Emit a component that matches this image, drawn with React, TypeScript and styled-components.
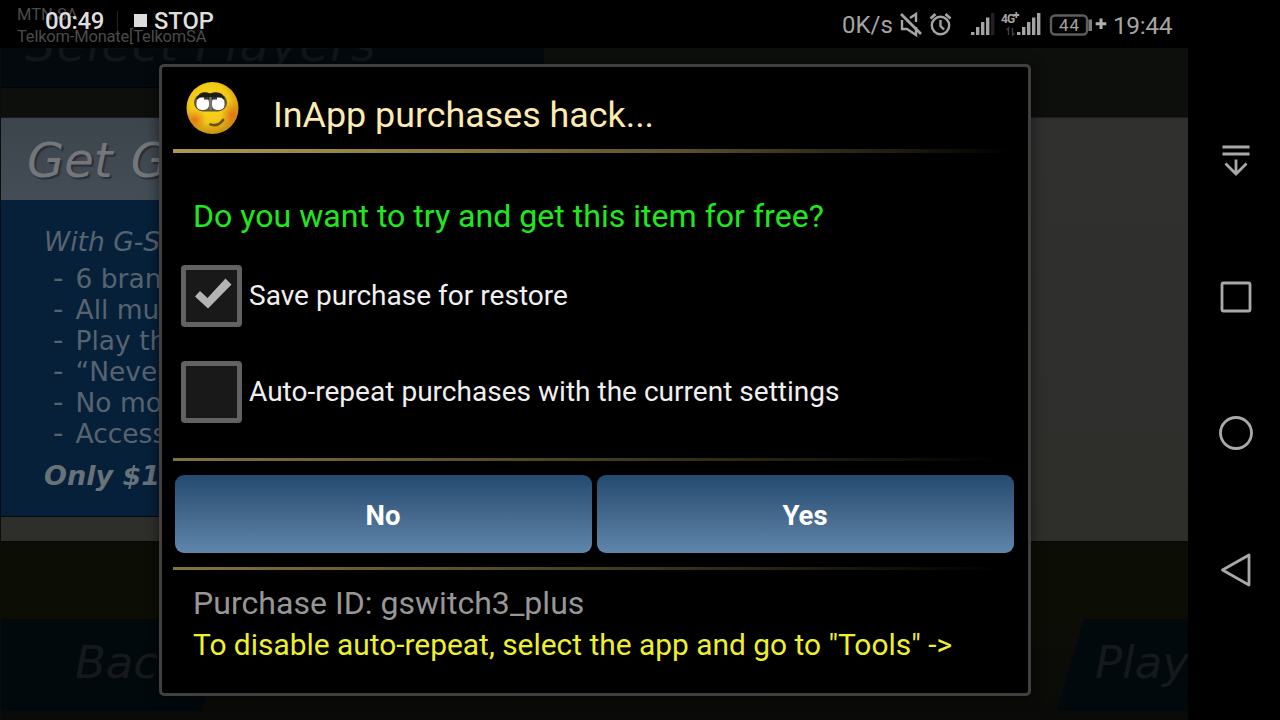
import React from "react";
import styled, { createGlobalStyle } from "styled-components";

const GlobalStyle = createGlobalStyle`
  html, body { margin: 0; padding: 0; background: #000; }
  body { width: 1280px; height: 720px; overflow: hidden; }
  * { box-sizing: border-box; }
`;

const Device = styled.div`
  display: grid;
  grid-template-columns: 1188px 92px;
  width: 1280px;
  height: 720px;
  background: #000;
  overflow: hidden;
  font-family: Roboto, "Liberation Sans", sans-serif;
`;

const Main = styled.main`
  position: relative;
  display: flex;
  flex-direction: column;
  height: 720px;
  overflow: hidden;
`;

/* ---------- status bar ---------- */

const StatusBar = styled.header`
  position: relative;
  display: flex;
  justify-content: space-between;
  height: 48px;
  flex: none;
  background: #000;
`;

const Carriers = styled.div`
  padding: 4px 0 0 17px;
  color: #4b4b4b;
  font-size: 16.5px;
  line-height: 22px;
  white-space: nowrap;
`;

const CarrierName = styled.div<{ $spacing?: number }>`
  height: 21.5px;
  letter-spacing: ${(p) => p.$spacing ?? 0}px;
`;

const Recorder = styled.div`
  position: absolute;
  left: 45px;
  top: 7px;
  display: flex;
  align-items: center;
  height: 28px;
  color: #dedede;
  font-size: 24px;
  font-weight: 500;
  line-height: 28px;
  white-space: nowrap;
`;

const RecorderTime = styled.span`
  width: 72px;
  letter-spacing: -0.4px;
`;

const RecorderDivider = styled.span`
  width: 1px;
  height: 20px;
  margin-right: 16px;
  background: #222;
`;

const StopSquare = styled.span`
  width: 13px;
  height: 13px;
  margin: -2px 7px 0 0;
  background: #dcdcdc;
`;

const StopLabel = styled.span`
  font-size: 23.7px;
`;

const Indicators = styled.div`
  display: flex;
  align-items: center;
  height: 50px;
  padding-right: 16px;
  color: #a4a4a4;
  font-size: 24.5px;
`;

const Speed = styled.span`
  width: 57px;
  font-size: 24px;
  white-space: nowrap;
`;

const StatusGlyphs = styled.svg`
  display: block;
  width: 215px;
  height: 48px;
  margin-top: -2px;
`;

const Clock = styled.span`
  width: 59px;
  margin-left: -1px;
  white-space: nowrap;
  letter-spacing: -0.4px;
`;

/* ---------- dimmed game behind the dialog ---------- */

const Game = styled.section`
  position: relative;
  display: flex;
  flex-direction: column;
  flex: 1;
  padding-left: 1px;
  background: #0c0d0a;
  font-family: "DejaVu Sans", sans-serif;
`;

const GameTop = styled.div`
  height: 69px;
  flex: none;
  background: #0d0f0c;
`;

const GameHeading = styled.div`
  width: 543px;
  height: 40px;
  padding-left: 24px;
  overflow: hidden;
  background: #03090c;
  border-bottom: 1px solid #020303;
  color: #10161a;
  font-size: 48px;
  font-style: italic;
  letter-spacing: 1px;
  white-space: nowrap;

  & > span {
    display: block;
    margin-top: -4px;
    line-height: 0;
  }
`;

const GamePanel = styled.div`
  height: 426px;
  flex: none;
  background: linear-gradient(#30302f, #2e2e2b);
  border-top: 1px solid #1c1c1b;
  border-bottom: 2px solid #090a06;
`;

const Offer = styled.div`
  width: 560px;
  height: 399px;
  background: #06203a;
  border-bottom: 1px solid #020a12;
  white-space: nowrap;
`;

const OfferTitle = styled.h1`
  height: 82px;
  margin: 0;
  padding-left: 26px;
  background: linear-gradient(#3c444c, #444c55);
  color: #73777b;
  font-size: 48px;
  font-weight: 400;
  font-style: italic;
  line-height: 84px;
  word-spacing: 3px;
  text-shadow: 2px 2px 1px #2b3036;
`;

const OfferBody = styled.div`
  padding: 25px 0 0 43px;
  color: #57646f;
  font-size: 26.5px;
`;

const OfferLead = styled.p<{ $bold?: boolean }>`
  height: 40px;
  margin: 0;
  font-style: italic;
  font-weight: ${(p) => (p.$bold ? 700 : 400)};
  font-size: ${(p) => (p.$bold ? 27 : 26.5)}px;
  color: ${(p) => (p.$bold ? "#687279" : "#57646f")};
  line-height: 34px;
`;

const OfferList = styled.ul`
  margin: -2px 0 10px;
  padding: 0 0 0 9px;
  list-style: none;
  line-height: 31px;
`;

const OfferItem = styled.li`
  display: flex;
`;

const OfferDash = styled.span`
  width: 22.5px;
  font-size: 29px;
`;

const GameFooter = styled.div`
  display: flex;
  justify-content: space-between;
  height: 178px;
  padding-top: 76px;
  background: linear-gradient(#0c0e05 0, #0c0e05 62px, #0a0a08 100%);
`;

const GameButton = styled.div<{ $side: "left" | "right" }>`
  width: ${(p) => (p.$side === "left" ? 230 : 131)}px;
  height: 92px;
  padding-left: ${(p) => (p.$side === "left" ? 74 : 38)}px;
  overflow: hidden;
  background: #02090c;
  clip-path: ${(p) =>
    p.$side === "left"
      ? "polygon(0 0, 100% 0, 87% 100%, 0 100%)"
      : "polygon(27px 0, 100% 0, 100% 100%, 0 100%)"};
  color: #15191b;
  font-size: 45px;
  font-style: italic;
  line-height: 88px;
`;

/* ---------- dialog ---------- */

const Dialog = styled.section`
  position: absolute;
  left: 159px;
  top: 64px;
  display: flex;
  flex-direction: column;
  width: 872px;
  height: 632px;
  padding: 0 11px;
  background: #000;
  border: 3px solid #404040;
  border-radius: 5px;
  box-shadow: 0 2px 14px rgba(0, 0, 0, 0.55);
  white-space: nowrap;
`;

const DialogHeader = styled.header`
  display: flex;
  height: 82px;
  padding: 14px 0 0 13px;
`;

const Smiley = styled.svg`
  width: 54px;
  height: 54px;
  margin-right: 33px;
`;

const DialogTitle = styled.h2`
  margin: 0;
  color: #fcebb0;
  font-size: 35.85px;
  font-weight: 400;
  line-height: 69px;
`;

const Rule = styled.div<{ $thick?: boolean }>`
  height: ${(p) => (p.$thick ? 4 : 3)}px;
  flex: none;
  background: ${(p) =>
    p.$thick
      ? "linear-gradient(90deg, #ac9950, #8b7c40 30%, #5c5129 60%, #000 99%)"
      : "linear-gradient(90deg, #83743c, #5a5029 35%, #302b15 65%, #000 98%)"};
`;

const DialogBody = styled.div`
  height: 305px;
`;

const Question = styled.p`
  height: 112px;
  margin: 0;
  padding: 43px 0 0 20px;
  color: #1fe81f;
  font-size: 32.1px;
  line-height: 40px;
`;

const Option = styled.label`
  display: flex;
  height: 62px;
  margin: 0 0 34px 8px;
  color: #f0f0f0;
  font-size: 28.05px;
  line-height: 62px;
`;

const Box = styled.span`
  display: flex;
  width: 61px;
  height: 62px;
  margin-right: 7px;
  border: 5px solid #626262;
  border-radius: 4px;
  background: #191919;
`;

const Actions = styled.div`
  display: flex;
  gap: 5px;
  height: 106px;
  padding: 14px 2px;
`;

const ActionButton = styled.button`
  width: 417px;
  height: 78px;
  padding: 4px 1px 0 0;
  border: 0;
  border-radius: 9px;
  background: linear-gradient(#244a70, #416589 45%, #6186ac);
  color: #fff;
  font-family: Roboto, "Liberation Sans", sans-serif;
  font-size: 27.5px;
  font-weight: 700;
  line-height: 74px;
`;

const Details = styled.footer`
  padding: 12px 0 0 20px;
`;

const DetailLine = styled.p<{ $tone: "muted" | "warning" }>`
  height: 42px;
  margin: 0;
  line-height: 42px;
  color: ${(p) => (p.$tone === "muted" ? "#979797" : "#eef02c")};
  font-size: ${(p) => (p.$tone === "muted" ? 32.1 : 29.9)}px;
`;

/* ---------- navigation bar ---------- */

const NavBar = styled.nav`
  display: flex;
  flex-direction: column;
  align-items: center;
  gap: 96.7px;
  padding: 140px 0 0 4px;
  background: #000;
`;

const NavIcon = styled.svg`
  width: 40px;
  height: 40px;
  fill: none;
  stroke: #a9a9a9;
  stroke-width: 2.8;
`;

const offerItems = [
  "6 brand new",
  "All multi",
  "Play the",
  "“Never",
  "No more",
  "Access",
];

const Bars = ({ x, lit }: { x: number; lit: number }) => (
  <g fill="#a4a4a4">
    {[3, 8, 13, 17.5, 22].map((h, i) => (
      <rect key={h} x={x + i * 5} y={35 - h} width="3.4" height={h} opacity={i < lit ? 1 : 0.2} />
    ))}
  </g>
);

function StatusIcons() {
  return (
    <StatusGlyphs viewBox="899 0 215 48">
      <g fill="none" stroke="#a4a4a4" strokeWidth="2.4">
        <path d="M902 20v9h5l9 6V27M906 20h1M910 18l6-4v8" />
        <path d="M901 14l20 20" strokeWidth="2.8" />
        <circle cx="940.5" cy="25.5" r="8.7" />
        <path d="M940.5 20v6l3.5 3.5" />
        <path d="M930.5 18.5l5-4.5M950.5 18.5l-5-4.5" strokeWidth="2.8" />
      </g>
      <Bars x={971} lit={4} />
      <Bars x={1017} lit={5} />
      <text x="1001" y="22.5" fill="#a4a4a4" fontSize="12" fontWeight="700" letterSpacing="-0.8">4G</text>
      <path d="M1016.3 12v6M1013.3 15h6" stroke="#a4a4a4" strokeWidth="1.8" />
      <path d="M1008.5 35v-7l-2 2M1012.5 28v7l2-2" fill="none" stroke="#3c3c3c" strokeWidth="1.4" />
      <rect x="1051" y="15.5" width="36" height="19" rx="4" fill="none" stroke="#5c5c5c" strokeWidth="2.4" />
      <rect x="1088.5" y="19.5" width="3.5" height="11.5" fill="#7c7c7c" />
      <text x="1059" y="31" fill="#a4a4a4" fontSize="17" textLength="20">44</text>
      <path d="M1101 18.5v10.5M1095.7 23.8h10.6" stroke="#b0b0b0" strokeWidth="3" />
    </StatusGlyphs>
  );
}

function SmileyIcon() {
  return (
    <Smiley viewBox="0 0 54 54">
      <defs>
        <radialGradient id="skin" cx="45%" cy="40%" r="58%">
          <stop offset="0" stopColor="#f7dc22" />
          <stop offset="0.65" stopColor="#f3c814" />
          <stop offset="1" stopColor="#c99314" />
        </radialGradient>
        <radialGradient id="blush">
          <stop offset="0" stopColor="#e2691b" stopOpacity="0.85" />
          <stop offset="1" stopColor="#e2821b" stopOpacity="0" />
        </radialGradient>
        <clipPath id="face"><circle cx="26.5" cy="27" r="26" /></clipPath>
      </defs>
      <circle cx="26.5" cy="27" r="26" fill="url(#skin)" />
      <g clipPath="url(#face)">
        <ellipse cx="46" cy="34" rx="12" ry="15" fill="url(#blush)" />
        <ellipse cx="9" cy="39" rx="12" ry="11" fill="url(#blush)" />
      </g>
      <rect x="8" y="12.5" width="33" height="18" rx="9" fill="#5c5636" />
      <path d="M14 12.5Q19 10 24 12.500Q31 10 36 13L39 18H10Z" fill="#1f1c14" />
      <rect x="10.5" y="16.5" width="12.5" height="12.5" rx="5" fill="#fff" />
      <rect x="26" y="16.5" width="12.5" height="12.5" rx="5" fill="#fff" />
      <path d="M18 16h4.500v2.500h-4.500zM26.500 16h4.500v2.500h-4.500z" fill="#33333a" />
      <path d="M24.5 16v13" stroke="#77777c" strokeWidth="2.4" />
      <path d="M24.5 43.500Q32 46 37 39" fill="none" stroke="#6b5010" strokeWidth="2.8" strokeLinecap="round" />
    </Smiley>
  );
}

const CheckMark = () => (
  <svg width="51" height="52" viewBox="0 0 51 52">
    <path d="M9 26.500L14 21L21.500 28L39.500 8.500L45.500 14.500L22 38.500Z" fill="#b4b4b4" />
  </svg>
);

export default function App() {
  return (
    <>
      <GlobalStyle />
      <Device>
        <Main>
          <StatusBar>
            <Carriers>
              <CarrierName>MTN SA</CarrierName>
              <CarrierName $spacing={-0.2}>Telkom-Monate[TelkomSA</CarrierName>
            </Carriers>
            <Recorder>
              <RecorderTime>00:49</RecorderTime>
              <RecorderDivider />
              <StopSquare />
              <StopLabel>STOP</StopLabel>
            </Recorder>
            <Indicators>
              <Speed>0K/s</Speed>
              <StatusIcons />
              <Clock>19:44</Clock>
            </Indicators>
          </StatusBar>

          <Game>
            <GameTop>
              <GameHeading><span>Select Players</span></GameHeading>
            </GameTop>
            <GamePanel>
              <Offer>
                <OfferTitle>Get G-Switch</OfferTitle>
                <OfferBody>
                  <OfferLead>With G-Switch</OfferLead>
                  <OfferList>
                    {offerItems.map((item) => (
                      <OfferItem key={item}>
                        <OfferDash>-</OfferDash>
                        <span>{item}</span>
                      </OfferItem>
                    ))}
                  </OfferList>
                  <OfferLead $bold>Only $1</OfferLead>
                </OfferBody>
              </Offer>
            </GamePanel>
            <GameFooter>
              <GameButton $side="left">Back</GameButton>
              <GameButton $side="right">Play</GameButton>
            </GameFooter>
          </Game>

          <Dialog>
            <DialogHeader>
              <SmileyIcon />
              <DialogTitle>InApp purchases hack...</DialogTitle>
            </DialogHeader>
            <Rule $thick />
            <DialogBody>
              <Question>Do you want to try and get this item for free?</Question>
              <Option>
                <Box><CheckMark /></Box>
                Save purchase for restore
              </Option>
              <Option>
                <Box />
                Auto-repeat purchases with the current settings
              </Option>
            </DialogBody>
            <Rule />
            <Actions>
              <ActionButton>No</ActionButton>
              <ActionButton>Yes</ActionButton>
            </Actions>
            <Rule />
            <Details>
              <DetailLine $tone="muted">Purchase ID: gswitch3_plus</DetailLine>
              <DetailLine $tone="warning">To disable auto-repeat, select the app and go to "Tools" -&gt;</DetailLine>
            </Details>
          </Dialog>
        </Main>

        <NavBar>
          <NavIcon viewBox="0 0 40 40">
            <path d="M6.500 7h27M6.500 14h27M20 19.500v15M9.500 23.500L20 34L30.500 23.500" />
          </NavIcon>
          <NavIcon viewBox="0 0 40 40">
            <rect x="6" y="6" width="28" height="28" rx="1.500" />
          </NavIcon>
          <NavIcon viewBox="0 0 40 40">
            <circle cx="20" cy="20" r="15.500" />
          </NavIcon>
          <NavIcon viewBox="0 0 40 40">
            <path d="M33 5L6.500 20L33 35Z" strokeLinejoin="round" />
          </NavIcon>
        </NavBar>
      </Device>
    </>
  );
}
